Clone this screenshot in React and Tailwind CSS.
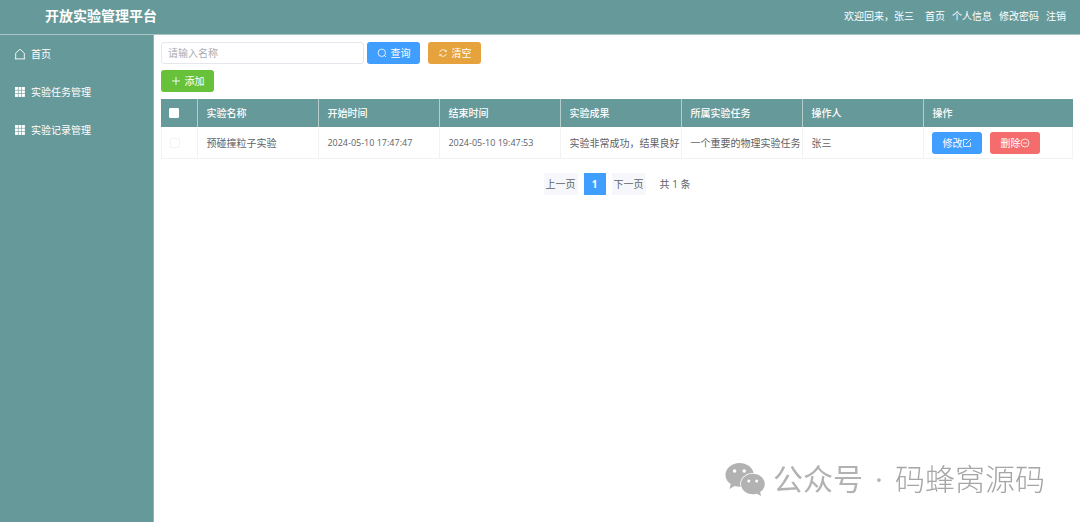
import { useState } from "react";

// ---------- Icons ----------

const HomeIcon = () => (
  <svg className="size-3 shrink-0" viewBox="0 0 12 12" fill="none" stroke="currentColor" aria-hidden="true">
    <path d="M1.700 11V5.100L6 1.200l4.300 3.900V11M.8 10.900h10.400" strokeWidth="0.9" strokeLinejoin="round" />
  </svg>
);

const GridIcon = () => (
  <svg className="size-3 shrink-0" viewBox="0 0 12 12" fill="currentColor" aria-hidden="true">
    {[1, 4.5, 8].map((y) =>
      [1, 4.5, 8].map((x) => <rect key={`${x}-${y}`} x={x} y={y} width="2.9" height="2.9" />)
    )}
  </svg>
);

const SearchIcon = () => (
  <svg className="size-2.5" viewBox="0 0 10 10" fill="none" stroke="currentColor" strokeWidth="0.8" aria-hidden="true">
    <circle cx="4.8" cy="4.8" r="3.7" />
    <path d="m7.5 7.5 1.5 1.5" />
  </svg>
);

const RefreshIcon = () => (
  <svg className="size-2.5" viewBox="0 0 10 10" fill="none" stroke="currentColor" strokeWidth="0.8" aria-hidden="true">
    <path d="M1.700 4.200A3.400 3.400 0 0 1 8 3.400M8.300 5.800A3.400 3.400 0 0 1 2 6.600M8.200 1.800v1.700H6.600M1.800 8.200V6.500h1.600" />
  </svg>
);

const PlusIcon = () => (
  <svg className="size-2.5" viewBox="0 0 10 10" fill="none" stroke="currentColor" strokeWidth="0.9" aria-hidden="true">
    <path d="M5 1v8M1 5h8" />
  </svg>
);

const EditIcon = () => (
  <svg className="size-2.5" viewBox="0 0 10 10" fill="none" stroke="currentColor" strokeWidth="0.8" aria-hidden="true">
    <path d="M5.5 1.5h-4v7h7v-4M4 6l5-5" />
  </svg>
);

const RemoveIcon = () => (
  <svg className="size-2.5" viewBox="0 0 10 10" fill="none" stroke="currentColor" strokeWidth="0.8" aria-hidden="true">
    <circle cx="5" cy="5" r="4" />
    <path d="M3 5h4" />
  </svg>
);

const WechatIcon = () => (
  <svg className="h-9 w-10" viewBox="0 0 40 36" aria-hidden="true">
    <path
      fill="#b2b2b2"
      d="M14.5 2C6.800 2 .5 7.200.5 13.900c0 3.800 2 7 5.200 9.200L4.500 28l5-3c1.600.5 3.300.8 5 .8h1.200a9.600 9.600 0 0 1-.5-3c0-6 5.700-10.900 12.700-10.900h.7C27.500 6.200 21.600 2 14.500 2Z"
    />
    <path
      fill="#b2b2b2"
      d="M39.800 23c0-5.700-5.400-10.200-12-10.200S16 17.300 16 23s5.200 10.300 11.800 10.300c1.400 0 2.700-.2 4-.6l4.400 2.300-1.100-3.900c2.900-1.800 4.700-4.800 4.700-8.100Z"
    />
    <g fill="#fff">
      <circle cx="9.600" cy="10" r="1.800" />
      <circle cx="19.200" cy="10" r="1.800" />
      <circle cx="23.800" cy="20" r="1.500" />
      <circle cx="31.700" cy="20" r="1.500" />
    </g>
  </svg>
);

// ---------- Data ----------

const userLinks = ["首页", "个人信息", "修改密码", "注销"];

const menu = [
  { label: "首页", icon: HomeIcon },
  { label: "实验任务管理", icon: GridIcon },
  { label: "实验记录管理", icon: GridIcon },
];

const columns = ["实验名称", "开始时间", "结束时间", "实验成果", "所属实验任务", "操作人"];

const records = [
  {
    id: 1,
    name: "预碰撞粒子实验",
    start: "2024-05-10 17:47:47",
    end: "2024-05-10 19:47:53",
    result: "实验非常成功，结果良好",
    task: "一个重要的物理实验任务",
    operator: "张三",
  },
];

const buttonBase = "inline-flex h-[22px] items-center justify-center rounded-[3px] text-white";
const checkbox = "block size-2.5 appearance-none rounded-[1px] border bg-white checked:bg-[#409eff]";
const cell = "border-r border-[#f3f3f3] px-2 whitespace-nowrap";

const App = () => {
  const [keyword, setKeyword] = useState("");
  const [selected, setSelected] = useState([]);

  const allSelected = selected.length === records.length;
  const toggle = (id) =>
    setSelected(selected.includes(id) ? selected.filter((s) => s !== id) : [...selected, id]);

  return (
    <div className="flex min-h-screen flex-col bg-white font-['Open_Sans','Noto_Sans_CJK_SC',sans-serif] text-[10px] leading-4 text-[#606266]">
      <header className="flex h-[35px] items-center justify-between border-b border-[#a9c6c6] bg-[#669999] pr-3.5 pb-[3px] pl-[45px] text-white">
        <h1 className="text-sm font-bold">开放实验管理平台</h1>
        <nav className="flex gap-[7px]">
          <span className="mr-1">欢迎回来，张三</span>
          {userLinks.map((label) => (
            <a key={label} href="#">
              {label}
            </a>
          ))}
        </nav>
      </header>

      <div className="flex grow">
        <aside className="w-[154px] shrink-0 border-r border-[#8fb3b3] bg-[#669999] text-white">
          {menu.map(({ label, icon: Icon }) => (
            <a key={label} href="#" className="flex h-[38px] items-center gap-[5px] pl-3.5">
              <Icon />
              {label}
            </a>
          ))}
        </aside>

        <main className="min-w-0 grow p-[7px]">
          {/* Search */}
          <form className="flex items-center" onSubmit={(e) => e.preventDefault()}>
            <input
              type="text"
              aria-label="名称"
              placeholder="请输入名称"
              value={keyword}
              onChange={(e) => setKeyword(e.target.value)}
              className="mr-[3px] h-[22px] w-[203px] rounded-[3px] border border-[#e4e7ed] px-1.5 placeholder:text-[#a8abb2]"
            />
            <button type="submit" className={`${buttonBase} mr-2 w-[53px] gap-1 bg-[#409eff]`}>
              <SearchIcon />
              查询
            </button>
            <button type="button" onClick={() => setKeyword("")} className={`${buttonBase} w-[53px] gap-1 bg-[#e6a23c]`}>
              <RefreshIcon />
              清空
            </button>
          </form>

          <button type="button" className={`${buttonBase} mt-1.5 mb-[7px] w-[53px] gap-1 bg-[#67c23a]`}>
            <PlusIcon />
            添加
          </button>

          <table className="w-full table-fixed border-separate border-spacing-0 text-left">
            <colgroup>
              <col className="w-[4.1%]" />
              {columns.map((c) => (
                <col key={c} className="w-[13.27%]" />
              ))}
              <col />
            </colgroup>
            <thead>
              <tr className="h-7 bg-[#669999] text-white">
                <th className="border-r border-[#b5cdcd] px-2">
                  <input
                    type="checkbox"
                    aria-label="全选"
                    checked={allSelected}
                    onChange={() => setSelected(allSelected ? [] : records.map((r) => r.id))}
                    className={`${checkbox} border-white`}
                  />
                </th>
                {columns.map((c) => (
                  <th key={c} className="border-r border-[#b5cdcd] px-2 font-medium">
                    {c}
                  </th>
                ))}
                <th className="px-2 font-medium">操作</th>
              </tr>
            </thead>
            <tbody>
              {records.map((r) => (
                <tr key={r.id} className="h-8 *:border-b *:first:border-l">
                  <td className={cell}>
                    <input
                      type="checkbox"
                      aria-label={r.name}
                      checked={selected.includes(r.id)}
                      onChange={() => toggle(r.id)}
                      className={`${checkbox} border-[#f3f3f3]`}
                    />
                  </td>
                  <td className={cell}>{r.name}</td>
                  <td className={`${cell} text-[9px]`}>{r.start}</td>
                  <td className={`${cell} text-[9px]`}>{r.end}</td>
                  <td className={cell}>{r.result}</td>
                  <td className={cell}>{r.task}</td>
                  <td className={cell}>{r.operator}</td>
                  <td className={cell}>
                    <div className="flex gap-2">
                      <button type="button" className={`${buttonBase} w-[50px] bg-[#409eff]`}>
                        修改
                        <EditIcon />
                      </button>
                      <button type="button" className={`${buttonBase} w-[50px] bg-[#f56c6c]`}>
                        删除
                        <RemoveIcon />
                      </button>
                    </div>
                  </td>
                </tr>
              ))}
            </tbody>
          </table>

          {/* Pagination */}
          <nav className="mt-3.5 flex items-center justify-center gap-1.5">
            <button type="button" className="h-[22px] w-[34px] bg-[#f5f7fa]">
              上一页
            </button>
            <button type="button" aria-current="page" className="h-[22px] w-[22px] bg-[#409eff] font-bold text-white">
              1
            </button>
            <button type="button" className="h-[22px] w-[34px] bg-[#f5f7fa]">
              下一页
            </button>
            <span className="ml-2">共 1 条</span>
          </nav>
        </main>
      </div>

      {/* Watermark */}
      <div className="pointer-events-none fixed right-[35px] bottom-[25px] flex items-center text-3xl text-[#b2b2b2]">
        <WechatIcon />
        <span className="ml-2">公众号</span>
        <span className="mx-3">·</span>
        <span className="font-light text-[#a6a6a6]">码蜂窝源码</span>
      </div>
    </div>
  );
};

export default App;
